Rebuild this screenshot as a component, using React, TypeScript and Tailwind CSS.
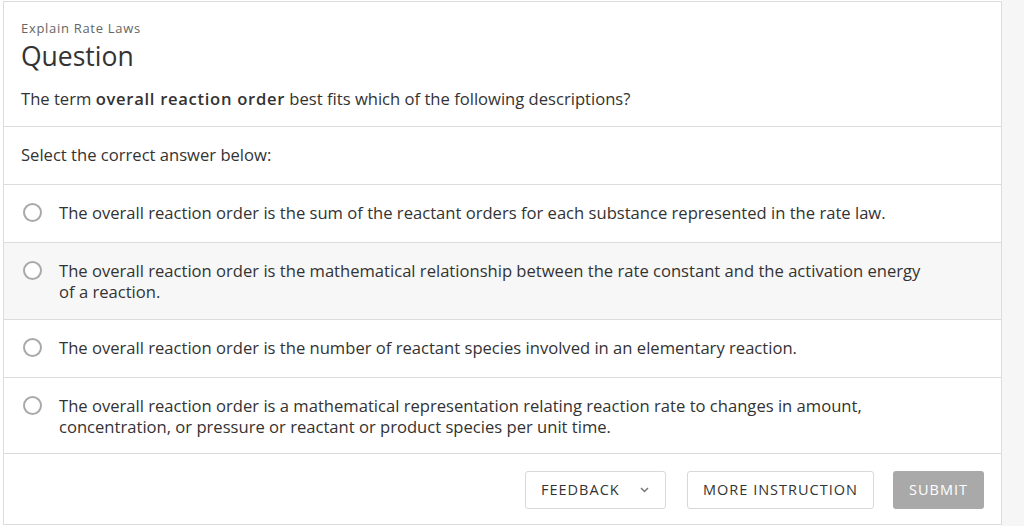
import React from "react";

const options = [
  "The overall reaction order is the sum of the reactant orders for each substance represented in the rate law.",
  "The overall reaction order is the mathematical relationship between the rate constant and the activation energy of a reaction.",
  "The overall reaction order is the number of reactant species involved in an elementary reaction.",
  "The overall reaction order is a mathematical representation relating reaction rate to changes in amount, concentration, or pressure or reactant or product species per unit time.",
];

export default function App() {
  return (
    <div
      className="flex h-[526px] w-[1024px] bg-white text-[#333]"
      style={{ fontFamily: '"Open Sans", "Noto Sans", sans-serif' }}
    >
      <div className="w-[3px] shrink-0" />
      <div className="mt-[1px] flex h-[524px] w-[999px] shrink-0 flex-col border border-[#dcdcdc] bg-white">
        <div className="h-[125px] border-b border-[#dcdcdc] px-[17px] pt-[17px]">
          <div className="text-[13px] leading-[18px] tracking-[0.7px] text-[#666]">Explain Rate Laws</div>
          <div className="mt-[2px] text-[26.5px] leading-[34px] text-[#333]">Question</div>
          <div className="mt-[15px] text-[16.6px] leading-[22px] text-[#333]">
            The term <span className="font-semibold tracking-[0.7px]">overall reaction order</span> best fits which of the following descriptions?
          </div>
        </div>
        <div className="flex h-[58px] items-center border-b border-[#dcdcdc] px-[17px] text-[16.6px]">
          Select the correct answer below:
        </div>
        {options.map((o, i) => (
          <div
            key={i}
            className={`flex min-h-[58px] items-start border-b border-[#dcdcdc] pl-[19px] pr-[66px] pt-[17px] text-[16.6px] leading-[21px] ${
              i === 1 ? "bg-[#f7f7f7] pb-[17px]" : "bg-white pb-[16px]"
            }`}
          >
            <span className="mt-[1px] mr-[17px] h-[19px] w-[19px] shrink-0 rounded-full border-2 border-[#a9a9a9] bg-white" />
            <span>{o}</span>
          </div>
        ))}
        <div className="flex flex-1 items-center justify-end pr-[17px] pt-[2px]">
          <button className="flex h-[38px] w-[141px] items-center justify-between rounded-[3px] border border-[#d8d8d8] bg-white pl-[15px] pr-[16px] text-[14.5px] tracking-[1px] text-[#333]">
            <span>FEEDBACK</span>
            <svg width="9" height="6" viewBox="0 0 9 6" fill="none">
              <path d="M1 1l3.5 3.5L8 1" stroke="#777" strokeWidth="1.5" />
            </svg>
          </button>
          <button className="ml-[21px] h-[38px] w-[187px] rounded-[3px] border border-[#d8d8d8] bg-white text-[14.5px] tracking-[1px] text-[#333]">
            MORE INSTRUCTION
          </button>
          <button className="ml-[19px] h-[38px] w-[91px] rounded-[3px] bg-[#a9a9a9] text-[14.5px] tracking-[1px] text-white">
            SUBMIT
          </button>
        </div>
      </div>
      <div className="flex-1 bg-[#f6f6f6]" />
    </div>
  );
}
